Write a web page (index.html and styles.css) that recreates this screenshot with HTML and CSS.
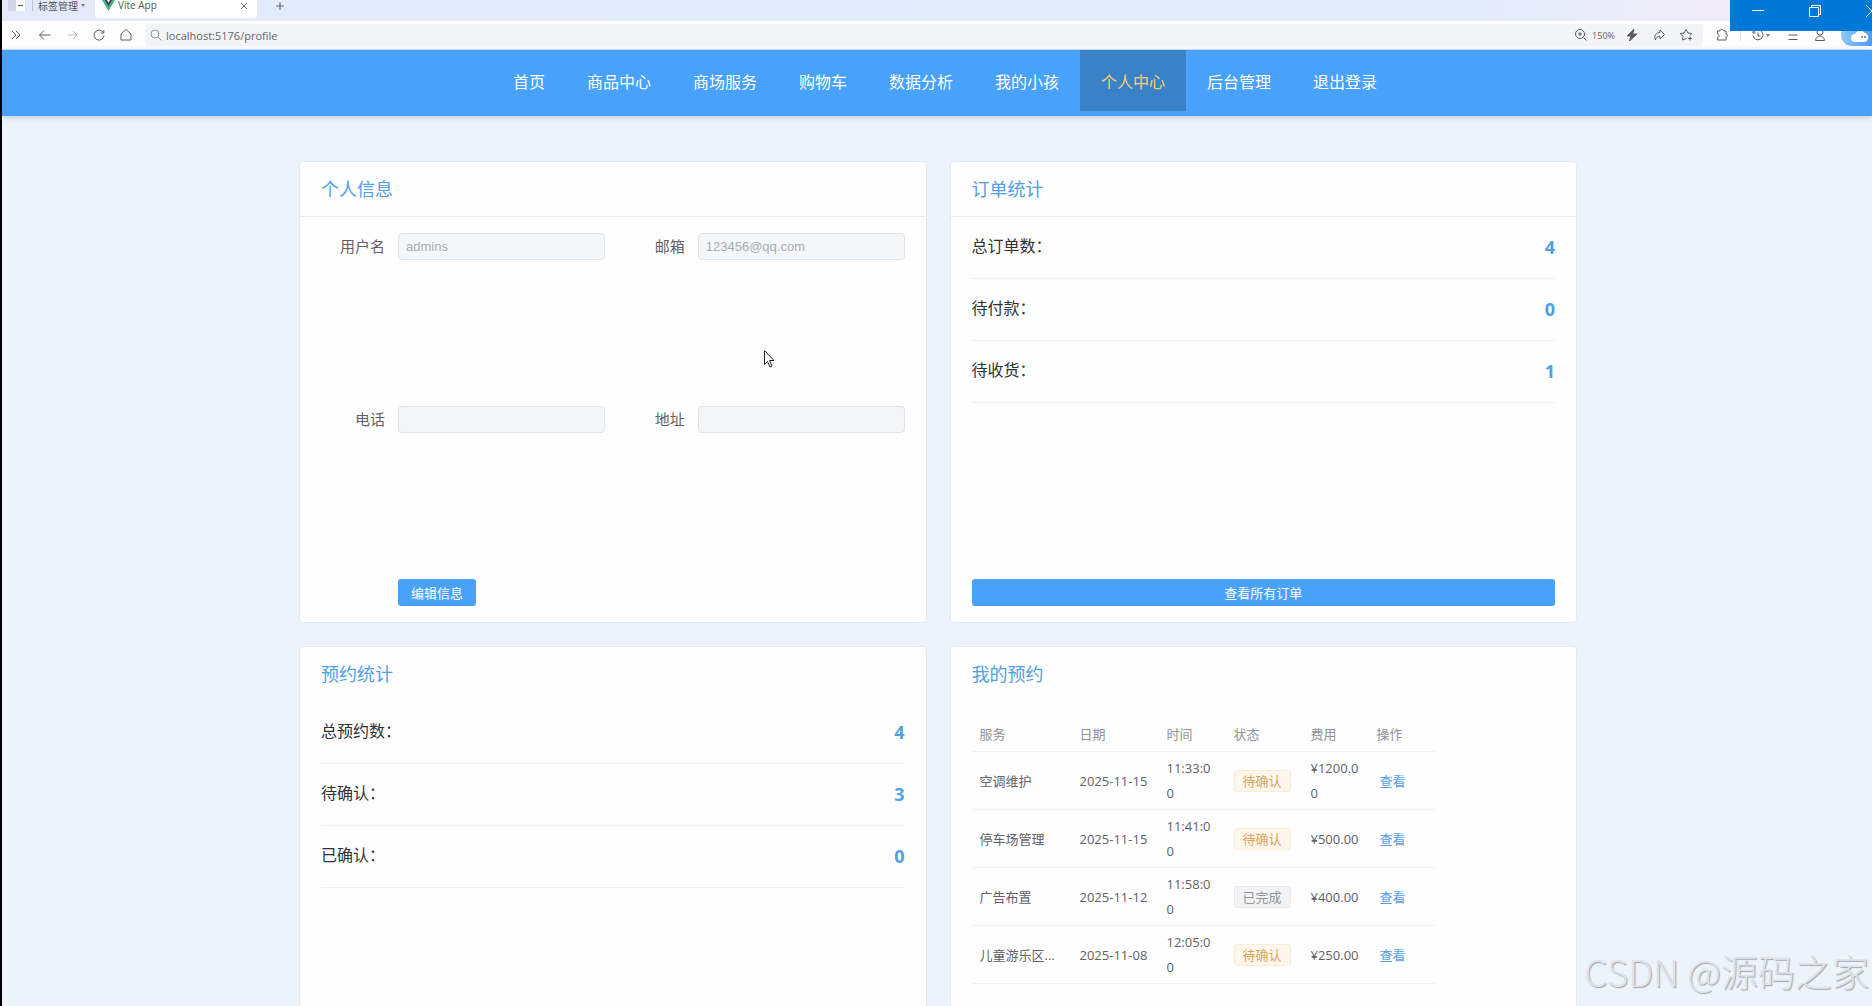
FILE: index.html
```html
<!doctype html>
<html lang="zh-CN">
<head>
    <meta charset="UTF-8">
    <title>Vite App</title>
    <link rel="stylesheet" href="styles.css">
</head>
<body>
<!--浏览器标签栏-->
<div class="tabbar">
    <button class="side-toggle" aria-label="侧栏"><span></span></button>
    <button class="tab-manage">标签管理<i class="caret"></i></button>
    <div class="tab">
        <svg width="13" height="11" viewBox="0 0 13 11"><path d="M0 0h2.6l3.9 6.8L10.4 0H13L6.500 11z" fill="#41b883"/><path d="M2.600 0H5l1.500 2.700L8 0h2.400L6.500 6.800z" fill="#35495e"/></svg>
        <span>Vite App</span>
        <button class="tab-close" aria-label="关闭"><svg width="8" height="8" viewBox="0 0 8 8"><path d="M1 1l6 6M7 1L1 7"/></svg></button>
    </div>
    <button class="tab-new" aria-label="新标签页"><svg width="10" height="10" viewBox="0 0 10 10"><path d="M5 1v8M1 5h8"/></svg></button>
</div>

<!--地址栏-->
<div class="toolbar">
    <button class="expand" aria-label="展开"><svg viewBox="0 0 16 16"><path d="M4 4l4 4-4 4M8 4l4 4-4 4"/></svg></button>
    <button aria-label="后退"><svg viewBox="0 0 16 16"><path d="M13.500 8h-11M7 3.500L2.500 8 7 12.500"/></svg></button>
    <button class="off" aria-label="前进"><svg viewBox="0 0 16 16"><path d="M3.500 8h9M9 4l4 4-4 4"/></svg></button>
    <button aria-label="刷新"><svg viewBox="0 0 16 16"><path d="M12.300 5.500A5 5 0 1 0 13 8.500M12.800 3v3h-3"/></svg></button>
    <button aria-label="主页"><svg viewBox="0 0 16 16"><path d="M3 13V7l5-4.500L13 7v6z"/></svg></button>
    <div class="address">
        <svg class="search" viewBox="0 0 16 16"><circle cx="7" cy="7" r="4"/><path d="M10 10l3.500 3.500"/></svg>
        <input type="text" value="localhost:5176/profile" aria-label="地址">
        <svg viewBox="0 0 16 16"><circle cx="7" cy="7" r="4.500"/><path d="M10.500 10.500l3 3M5 7h4M7 5v4"/></svg>
        <span class="zoom">150%</span>
        <svg class="solid" viewBox="0 0 16 16"><path d="M10 2L3 9h4l-1.500 5L13 7H8.500z"/></svg>
        <svg viewBox="0 0 16 16"><path d="M9 3l4.500 4.500L9 12V9.500C6 9.500 5 10.500 4.500 13 2.500 9 5 5.500 9 5.500z"/></svg>
        <svg viewBox="0 0 16 16"><path d="M8.500 11.500L4.500 13l.5-3.500L2.500 6.500 6 6l2-3.500L10 6l3.500.5L12 8.500M12 9.500v4M10 11.500h4"/></svg>
    </div>
    <button aria-label="扩展"><svg viewBox="0 0 16 16"><path d="M3.500 4H6c0-2.200 3.500-2.200 3.500 0H12v3c2 0 2 3 0 3v3H3.500v-2.500c2 0 2-3.500 0-3.500z"/></svg></button>
    <i class="sep"></i>
    <button class="history" aria-label="历史"><svg viewBox="0 0 16 16"><path d="M3.500 5.500A5 5 0 1 1 3 8.500M3 3.500v2.500h2.500M8 5.500V9h2.500"/></svg><i class="caret"></i></button>
    <button aria-label="菜单"><svg viewBox="0 0 16 16"><path d="M3.500 3.500h9M3.500 8h9M3.500 12.500h9"/></svg></button>
    <button class="user" aria-label="用户"><svg viewBox="0 0 16 16"><circle cx="8" cy="5" r="3"/><path d="M3.500 13.500C4 7.500 12 7.500 12.500 13.500z"/></svg></button>
    <svg class="cloud" viewBox="0 0 31 22"><defs><linearGradient id="sky" x2="1" y2="0"><stop offset="0" stop-color="#8cc8fb"/><stop offset="1" stop-color="#3b8ff0"/></linearGradient></defs><rect width="40" height="22" rx="11" fill="url(#sky)"/><path d="M14 18a4 4 0 0 1 0-8 6 6 0 0 1 10-1c5 1 4 9-1 9z" fill="#fff"/><path d="M21 12v2M24 12v2" stroke="#223" stroke-width="1"/></svg>
</div>

<!--窗口按钮,盖在浏览器上面-->
<div class="win-ctrl">
    <svg width="142" height="31" viewBox="0 0 142 31"><path d="M22 10.500h12M79.500 7.500h9v9h-9zM81.500 7.500v-2h9v9h-2M136 5l6 6M136 17l6-6"/></svg>
</div>

<nav class="nav">
    <a href="#">首页</a>
    <a href="#">商品中心</a>
    <a href="#">商场服务</a>
    <a href="#">购物车</a>
    <a href="#">数据分析</a>
    <a href="#">我的小孩</a>
    <a href="#" class="active">个人中心</a>
    <a href="#">后台管理</a>
    <a href="#">退出登录</a>
</nav>

<main class="page">
    <div class="profile">
        <section class="card">
            <h3>个人信息</h3>
            <form class="info" action="">
                <div class="field">
                    <label for="username">用户名</label>
                    <input type="text" id="username" value="admins" disabled>
                </div>
                <div class="field">
                    <label for="email">邮箱</label>
                    <input type="text" id="email" value="123456@qq.com" disabled>
                </div>
                <div class="field">
                    <label for="phone">电话</label>
                    <input type="text" id="phone" disabled>
                </div>
                <div class="field">
                    <label for="address">地址</label>
                    <input type="text" id="address" disabled>
                </div>
                <div class="field submit">
                    <button type="button" class="btn">编辑信息</button>
                </div>
            </form>
        </section>

        <section class="card">
            <h3>订单统计</h3>
            <div class="stats">
                <p><span>总订单数：</span><b>4</b></p>
                <p><span>待付款：</span><b>0</b></p>
                <p><span>待收货：</span><b>1</b></p>
                <button type="button" class="btn">查看所有订单</button>
            </div>
        </section>

        <section class="card plain">
            <h3>预约统计</h3>
            <div class="stats">
                <p><span>总预约数：</span><b>4</b></p>
                <p><span>待确认：</span><b>3</b></p>
                <p><span>已确认：</span><b>0</b></p>
            </div>
        </section>

        <section class="card plain">
            <h3>我的预约</h3>
            <table class="booking">
                <colgroup>
                    <col class="c-service"><col class="c-date"><col class="c-time"><col class="c-state"><col class="c-fee"><col class="c-op">
                </colgroup>
                <thead>
                <tr><th>服务</th><th>日期</th><th>时间</th><th>状态</th><th>费用</th><th>操作</th></tr>
                </thead>
                <tbody>
                <tr><td>空调维护</td><td>2025-11-15</td><td>11:33:00</td><td><span class="tag">待确认</span></td><td>¥1200.00</td><td><a href="#">查看</a></td></tr>
                <tr><td>停车场管理</td><td>2025-11-15</td><td>11:41:00</td><td><span class="tag">待确认</span></td><td>¥500.00</td><td><a href="#">查看</a></td></tr>
                <tr><td>广告布置</td><td>2025-11-12</td><td>11:58:00</td><td><span class="tag done">已完成</span></td><td>¥400.00</td><td><a href="#">查看</a></td></tr>
                <tr><td>儿童游乐区...</td><td>2025-11-08</td><td>12:05:00</td><td><span class="tag">待确认</span></td><td>¥250.00</td><td><a href="#">查看</a></td></tr>
                </tbody>
            </table>
        </section>
    </div>
</main>

<svg class="cursor" width="12" height="18" viewBox="0 0 12 18"><path d="M.5.5v14l3-3 2.500 5.500 2-1L5.500 10.500H10z" fill="#fff" stroke="#222"/></svg>
<div class="watermark">CSDN @源码之家</div>
</body>
</html>
```

FILE: styles.css
```css
* {
    box-sizing: border-box;
}

body {
    margin: 0;
    height: 100vh;
    display: flex;
    flex-direction: column;
    overflow: hidden;
    position: relative;
    border-left: 2px solid #000;
    background: #ecf3fb;
    color: #303133;
    font-family: "Open Sans", "Noto Sans CJK SC", sans-serif;
}

button, input {
    font-family: inherit;
    margin: 0;
}

svg {
    flex: none;
}

/*浏览器标签栏*/
.tabbar {
    display: flex;
    align-items: flex-start;
    height: 21px;
    background: linear-gradient(90deg, #e2eafb 0%, #e2ecfb 78%, #f0ebf8 92%);
    font-size: 10px;
    line-height: 11px;
    color: #555;
}

.tabbar button, .toolbar button {
    display: flex;
    align-items: center;
    padding: 0;
    border: 0;
    background: none;
    color: inherit;
}

.tabbar svg path {
    stroke-width: 1;
}

.tabbar button svg {
    fill: none;
    stroke: #666;
}

.tabbar .side-toggle {
    width: 18px;
    height: 11px;
    margin-left: 6px;
    padding-left: 8px;
    border-radius: 2px;
    background: #cfd6e6;
}

.side-toggle span {
    width: 9px;
    height: 11px;
    border: solid #fff;
    border-width: 5px 2px;
    background: #555;
}

.tabbar .tab-manage {
    gap: 3px;
    height: 11px;
    margin-left: 6px;
    padding-left: 5px;
    border-left: 1px solid #bcc3d2;
    font-size: 10px;
}

.caret {
    border: 2px solid transparent;
    border-top: 3px solid #777;
    border-bottom: 0;
}

.tab {
    display: flex;
    gap: 3px;
    width: 162px;
    height: 18px;
    margin-left: 10px;
    padding: 0 9px 0 7px;
    border-radius: 0 0 3px 3px;
    background: #fff;
}

.tabbar .tab-close {
    height: 11px;
    margin-left: auto;
}

.tabbar .tab-new {
    height: 11px;
    margin-left: 18px;
}

/*地址栏*/
.toolbar {
    display: flex;
    align-items: center;
    gap: 11px;
    height: 29px;
    padding-left: 6px;
    border-bottom: 1px solid #d3e4f4;
    background: #fdfefd;
}

.toolbar svg {
    width: 16px;
    height: 16px;
    fill: none;
    stroke: #5c5c5c;
    stroke-width: 1;
}

.toolbar .solid {
    fill: #5c5c5c;
}

.toolbar .expand {
    margin-right: 2px;
}

.toolbar .off {
    opacity: .4;
}

.address {
    flex: 1;
    display: flex;
    align-items: center;
    gap: 11px;
    height: 22px;
    padding: 0 9px 0 3px;
    border-radius: 4px;
    background: #f3f4f6;
}

.address .search {
    opacity: .6;
}

.address input {
    flex: 1;
    margin-left: -9px;
    padding: 0;
    border: 0;
    background: none;
    font-size: 11px;
    color: #666;
}

.zoom {
    margin: 0 -2px 0 -8px;
    font-size: 9px;
    color: #666;
}

.sep {
    width: 1px;
    height: 12px;
    margin: 0 -2px 0 -1px;
    background: #ddd;
}

.toolbar .history {
    margin-right: 4px;
}

.toolbar .user {
    margin-right: 2px;
}

.toolbar .cloud {
    width: 31px;
    height: 22px;
    stroke: none;
}

/*窗口按钮*/
.win-ctrl {
    position: absolute;
    top: 0;
    right: 0;
    height: 31px;
    background: #0078d7;
}

.win-ctrl path {
    fill: none;
    stroke: #fff;
}

/*导航*/
.nav {
    display: flex;
    justify-content: center;
    padding: 0 0 5px 16px;
    background: #48a1fa;
    box-shadow: 0 1px 6px rgba(0, 0, 0, .18);
    z-index: 1;
}

.nav a {
    padding: 20px 21px 16px;
    color: #fff;
    font-size: 16px;
    line-height: 25px;
    text-decoration: none;
}

.nav .active {
    background: #3a82c8;
    color: #f5cf72;
}

/*内容*/
.page {
    flex: 1;
    min-height: 0;
    overflow: hidden;
    padding: 45px 0 0 2px;
}

.profile {
    display: grid;
    grid-template-columns: 1fr 1fr;
    grid-auto-rows: 1fr;
    gap: 23px;
    max-width: 1278px;
    margin: 0 auto;
}

.card {
    display: flex;
    flex-direction: column;
    border: 1px solid #e4eaf2;
    border-radius: 4px;
    background: #fdfefd;
}

.card h3 {
    margin: 0;
    padding: 16px 21px;
    border-bottom: 1px solid #e9ecef;
    color: #529fe6;
    font-size: 18px;
    font-weight: 400;
    line-height: 22px;
}

.plain h3 {
    border-color: transparent;
}

.info {
    display: grid;
    grid-template-columns: 1fr 1fr;
    gap: 146px 16px;
    padding: 16px 21px;
}

.field {
    display: flex;
    height: 27px;
}

.field label {
    width: 77px;
    padding-right: 13px;
    color: #606266;
    font-size: 15px;
    line-height: 27px;
    text-align: right;
}

.field input {
    flex: 1;
    min-width: 0;
    padding: 0 7px;
    border: 1px solid #e1e5ea;
    border-radius: 4px;
    background: #f4f7fa;
    color: #a8abb2;
    font-family: "Liberation Sans", Arial, sans-serif;
    font-size: 13px;
}

.submit {
    padding-left: 77px;
}

.btn {
    height: 27px;
    padding: 0 13px;
    border: 0;
    border-radius: 3px;
    background: #48a1fa;
    color: #fff;
    font-size: 13px;
}

.stats {
    flex: 1;
    display: flex;
    flex-direction: column;
    padding: 0 21px 16px;
}

.stats p {
    display: flex;
    justify-content: space-between;
    margin: 0;
    padding: 17px 0 19px;
    border-bottom: 1px solid #eff1f3;
    font-size: 16px;
    line-height: 25px;
}

.stats b {
    padding-top: 1px;
    color: #529fe6;
    font-size: 18px;
    line-height: 24px;
}

.stats .btn {
    margin-top: auto;
}

/*预约表格*/
.booking {
    table-layout: fixed;
    width: 463px;
    margin: 16px 21px;
    border-spacing: 0;
    color: #606266;
    font-size: 13px;
    line-height: 25px;
}

.c-service { width: 100px; }
.c-date { width: 87px; }
.c-time { width: 67px; }
.c-state { width: 77px; }
.c-fee { width: 66px; }
.c-op { width: 66px; }

.booking th, .booking td {
    padding: 4px 8px;
    border-bottom: 1px solid #f0f2f5;
    text-align: left;
    word-break: break-all;
}

.booking th {
    color: #909399;
    font-weight: 400;
}

.booking td {
    padding-bottom: 3px;
}

.booking a {
    padding-left: 3px;
    color: #529fe6;
    text-decoration: none;
}

.tag {
    display: inline-block;
    padding: 0 8px;
    border: 1px solid #faecd8;
    border-radius: 3px;
    background: #fdf6ec;
    color: #dba55c;
    line-height: 20px;
    white-space: nowrap;
}

.done {
    border-color: #e9e9eb;
    background: #f2f3f4;
    color: #909399;
}

.cursor {
    position: absolute;
    top: 350px;
    left: 762px;
}

.watermark {
    position: absolute;
    right: 3px;
    bottom: 8px;
    color: #dfe3e8;
    font-family: "Noto Sans CJK SC", sans-serif;
    font-size: 37px;
    font-weight: 300;
    text-shadow: 1px 1px 1px #a0a5ab;
}
```
